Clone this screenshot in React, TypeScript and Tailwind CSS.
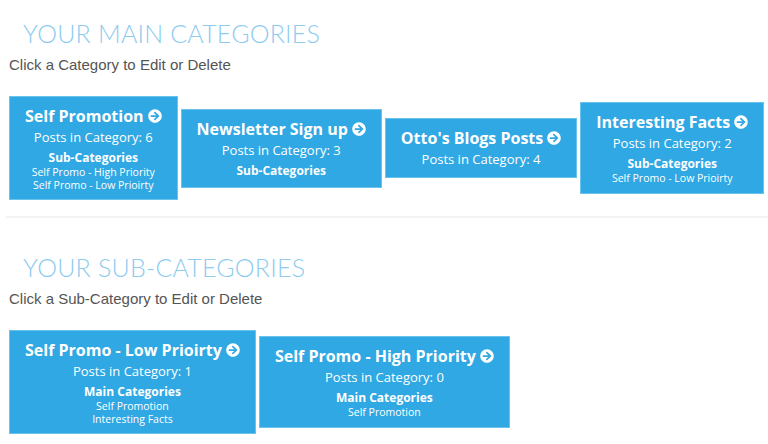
import React from "react";
import { FaArrowCircleRight } from "react-icons/fa";

type Card = {
  title: string;
  posts: number;
  label?: string;
  items?: string[];
};

const mainCategories: Card[] = [
  { title: "Self Promotion", posts: 6, label: "Sub-Categories", items: ["Self Promo - High Priority", "Self Promo - Low Prioirty"] },
  { title: "Newsletter Sign up", posts: 3, label: "Sub-Categories", items: [] },
  { title: "Otto's Blogs Posts", posts: 4 },
  { title: "Interesting Facts", posts: 2, label: "Sub-Categories", items: ["Self Promo - Low Prioirty"] },
];

const subCategories: Card[] = [
  { title: "Self Promo - Low Prioirty", posts: 1, label: "Main Categories", items: ["Self Promotion", "Interesting Facts"] },
  { title: "Self Promo - High Priority", posts: 0, label: "Main Categories", items: ["Self Promotion"] },
];

function CategoryCard({ card }: { card: Card }) {
  return (
    <a href="#" className="block bg-[#2fa8e4] border border-[#6cc2ee] px-[15px] pt-[7px] pb-[8px] text-center text-white font-['Open_Sans',sans-serif]">
      <div className="flex items-center justify-center gap-[4px] text-[16px] font-bold leading-[24px]">
        <span>{card.title}</span>
        <FaArrowCircleRight className="text-[14px]" />
      </div>
      <div className="text-[13px] leading-[19px]">Posts in Category: {card.posts}</div>
      {card.label && <div className="mt-[2px] text-[12px] font-bold leading-[17px]">{card.label}</div>}
      {card.items && card.items.length > 0 && (
        <div className="text-[10.5px] leading-[12.5px]">
          {card.items.map((item) => (
            <div key={item}>{item}</div>
          ))}
        </div>
      )}
    </a>
  );
}

function Section({ heading, hint, cards }: { heading: string; hint: string; cards: Card[] }) {
  return (
    <section>
      <h2 className="pl-[14px] text-[25px] leading-[32px] font-light text-[#8ecbef] font-['Lato',sans-serif] tracking-[0.2px]">{heading}</h2>
      <p className="mt-[6px] text-[15px] leading-[20px] text-[#555555] font-['Liberation_Sans',Arial,sans-serif]">{hint}</p>
      <div className="mt-[21px] flex items-center gap-[3px]">
        {cards.map((card) => (
          <CategoryCard key={card.title} card={card} />
        ))}
      </div>
    </section>
  );
}

export default function App(): JSX.Element {
  return (
    <div className="w-[768px] h-[444px] overflow-hidden bg-white pl-[9px] pt-[17px]">
      <Section heading="YOUR MAIN CATEGORIES" hint="Click a Category to Edit or Delete" cards={mainCategories} />
      <div className="mt-[16px] mb-[33px] -ml-[3px] h-[2px] bg-[#f3f3f3]" />
      <Section heading="YOUR SUB-CATEGORIES" hint="Click a Sub-Category to Edit or Delete" cards={subCategories} />
    </div>
  );
}
